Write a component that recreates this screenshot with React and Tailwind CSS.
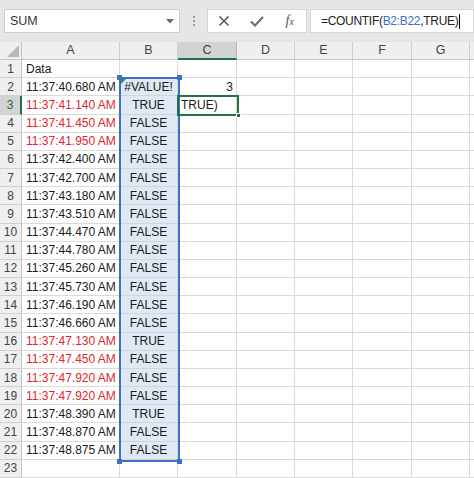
import React from "react";

const cols = [
  { l: "A", w: "w-[98px]" },
  { l: "B", w: "w-[58px]" },
  { l: "C", w: "w-[59px]" },
  { l: "D", w: "w-[58px]" },
  { l: "E", w: "w-[58px]" },
  { l: "F", w: "w-[59px]" },
  { l: "G", w: "w-[58px]" },
  { l: "", w: "w-[60px]" },
];

const data = [
  ["Data", "", ""],
  ["11:37:40.680 AM", "#VALUE!", "3"],
  ["11:37:41.140 AM", "TRUE", "TRUE)", true],
  ["11:37:41.450 AM", "FALSE", "", true],
  ["11:37:41.950 AM", "FALSE", "", true],
  ["11:37:42.400 AM", "FALSE", ""],
  ["11:37:42.700 AM", "FALSE", ""],
  ["11:37:43.180 AM", "FALSE", ""],
  ["11:37:43.510 AM", "FALSE", ""],
  ["11:37:44.470 AM", "FALSE", ""],
  ["11:37:44.780 AM", "FALSE", ""],
  ["11:37:45.260 AM", "FALSE", ""],
  ["11:37:45.730 AM", "FALSE", ""],
  ["11:37:46.190 AM", "FALSE", ""],
  ["11:37:46.660 AM", "FALSE", ""],
  ["11:37:47.130 AM", "TRUE", "", true],
  ["11:37:47.450 AM", "FALSE", "", true],
  ["11:37:47.920 AM", "FALSE", "", true],
  ["11:37:47.920 AM", "FALSE", "", true],
  ["11:37:48.390 AM", "TRUE", ""],
  ["11:37:48.870 AM", "FALSE", ""],
  ["11:37:48.875 AM", "FALSE", ""],
  ["", "", ""],
];

function Row({ n, row }) {
  const [a, b, c, red] = row;
  const sel = n === 3;
  const inB = n >= 2 && n <= 22;
  return (
    <div className={`flex ${n === 23 ? "h-[18px]" : "h-[18.18px]"}`}>
      <div
        className={`w-[22px] shrink-0 flex items-center justify-center text-[12px] border-b border-[#d0d0d0] ${
          sel
            ? "bg-[#d3d3d3] text-[#1e6b40] border-r-2 border-r-[#217346]"
            : "bg-[#efefef] text-[#444] border-r border-r-[#c4c4c4]"
        }`}
      >
        {n}
      </div>
      <div
        className={`w-[98px] shrink-0 flex items-center pl-[4px] text-[12px] whitespace-nowrap border-b border-r border-[#dadada] ${
          red ? "text-[#e0252f]" : "text-[#1b1b1b]"
        }`}
      >
        {a}
      </div>
      <div
        className={`w-[58px] shrink-0 flex items-center justify-center text-[12px] text-[#1b1b1b] border-b border-r border-[#dadada] ${
          inB ? "bg-[#e0e8f4] border-b-[#ccd5e2]" : ""
        }`}
      >
        {b}
      </div>
      <div
        className={`w-[59px] shrink-0 flex items-center text-[12px] text-[#1b1b1b] border-b border-r border-[#dadada] ${
          n === 2 ? "justify-end pr-[3px]" : "justify-start pl-[3px]"
        }`}
      >
        {c}
      </div>
      <div className="w-[58px] shrink-0 border-b border-r border-[#dadada]" />
      <div className="w-[58px] shrink-0 border-b border-r border-[#dadada]" />
      <div className="w-[59px] shrink-0 border-b border-r border-[#dadada]" />
      <div className="w-[58px] shrink-0 border-b border-r border-[#dadada]" />
      <div className="w-[60px] shrink-0 border-b border-r border-[#dadada]" />
    </div>
  );
}

export default function App() {
  return (
    <div
      className="w-[474px] h-[478px] overflow-hidden bg-white relative"
      style={{ fontFamily: '"Liberation Sans", Arial, sans-serif' }}
    >
      {/* Formula bar */}
      <div className="h-[42px] bg-[#e6e6e6] flex items-start pt-[9px]">
        <div className="ml-[4px] w-[176px] h-[24px] bg-white border border-[#cfcfcf] flex items-center justify-between pl-[5px] pr-[5px]">
          <span className="text-[12.5px] text-[#333]">SUM</span>
          <svg width="8" height="5" viewBox="0 0 8 5">
            <path d="M0 0 L8 0 L4 4.5 Z" fill="#6b6b6b" />
          </svg>
        </div>
        <div className="w-[27px] h-[24px] flex flex-col items-center justify-center gap-[2px]">
          <span className="w-[2px] h-[2px] bg-[#9a9a9a]" />
          <span className="w-[2px] h-[2px] bg-[#9a9a9a]" />
          <span className="w-[2px] h-[2px] bg-[#9a9a9a]" />
        </div>
        <div className="w-[100px] h-[24px] bg-white border border-[#d6d6d6] flex items-center">
          <div className="w-[33px] flex justify-center">
            <svg width="12" height="12" viewBox="0 0 12 12">
              <path d="M1.5 1.5 L10.5 10.5 M10.5 1.5 L1.5 10.5" stroke="#5a5a5a" strokeWidth="1.6" />
            </svg>
          </div>
          <div className="w-[33px] flex justify-center">
            <svg width="14" height="11" viewBox="0 0 14 11">
              <path d="M1 5.5 L5 9.5 L13 1" stroke="#6a6a6a" strokeWidth="2" fill="none" />
            </svg>
          </div>
          <div className="w-[33px] flex justify-center">
            <span
              className="italic text-[14px] text-[#555] leading-none"
              style={{ fontFamily: '"Liberation Serif", "Times New Roman", serif' }}
            >
              f<span className="text-[10px]">x</span>
            </span>
          </div>
        </div>
        <div className="ml-[3px] flex-1 h-[24px] bg-white border border-[#d6d6d6] flex items-center pl-[10px]">
          <span className="text-[12px] text-[#222] whitespace-nowrap tracking-[-0.3px]">
            =COUNTIF(<span className="text-[#3f6fc4]">B2:B22</span>,TRUE)
          </span>
          <span className="w-[1px] h-[15px] bg-black ml-[1px]" />
        </div>
      </div>

      {/* Grid */}
      <div className="relative">
        {/* header row */}
        <div className="flex h-[18px]">
          <div className="w-[22px] shrink-0 bg-[#efefef] border-r border-b border-[#c4c4c4] relative">
            <svg className="absolute right-[2px] bottom-[2px]" width="12" height="12" viewBox="0 0 12 12">
              <path d="M12 0 L12 12 L0 12 Z" fill="#b8b8b8" />
            </svg>
          </div>
          {cols.map((c, i) => (
            <div
              key={i}
              className={`${c.w} shrink-0 flex items-center justify-center text-[12.5px] border-r ${
                c.l === "C"
                  ? "bg-[#d3d3d3] text-[#444] border-r-[#b8b8b8] border-b-2 border-b-[#217346]"
                  : "bg-[#efefef] text-[#444] border-r-[#cfcfcf] border-b border-b-[#c4c4c4]"
              }`}
            >
              {c.l}
            </div>
          ))}
        </div>
        {data.map((row, i) => (
          <Row key={i} n={i + 1} row={row} />
        ))}

        {/* B2:B22 reference range */}
        <div className="absolute left-[119px] top-[35px] w-[61px] h-[385px] border-2 border-[#3d6fc5] pointer-events-none" />
        <div className="absolute left-[117px] top-[33px] w-[5px] h-[5px] bg-[#3d6fc5]" />
        <div className="absolute left-[177px] top-[33px] w-[5px] h-[5px] bg-[#3d6fc5]" />
        <div className="absolute left-[117px] top-[417px] w-[5px] h-[5px] bg-[#3d6fc5]" />
        <div className="absolute left-[177px] top-[417px] w-[5px] h-[5px] bg-[#3d6fc5]" />
        {/* error indicator B2 */}
        <svg className="absolute left-[121px] top-[37px]" width="5" height="5" viewBox="0 0 5 5">
          <path d="M0 0 L5 0 L0 5 Z" fill="#2e8b57" />
        </svg>

        {/* Active cell C3 */}
        <div className="absolute left-[177px] top-[53px] w-[62px] h-[21px] border-2 border-[#217346] pointer-events-none" />
        <div className="absolute left-[236px] top-[71px] w-[5px] h-[5px] bg-[#217346] border border-white" />
      </div>
    </div>
  );
}
